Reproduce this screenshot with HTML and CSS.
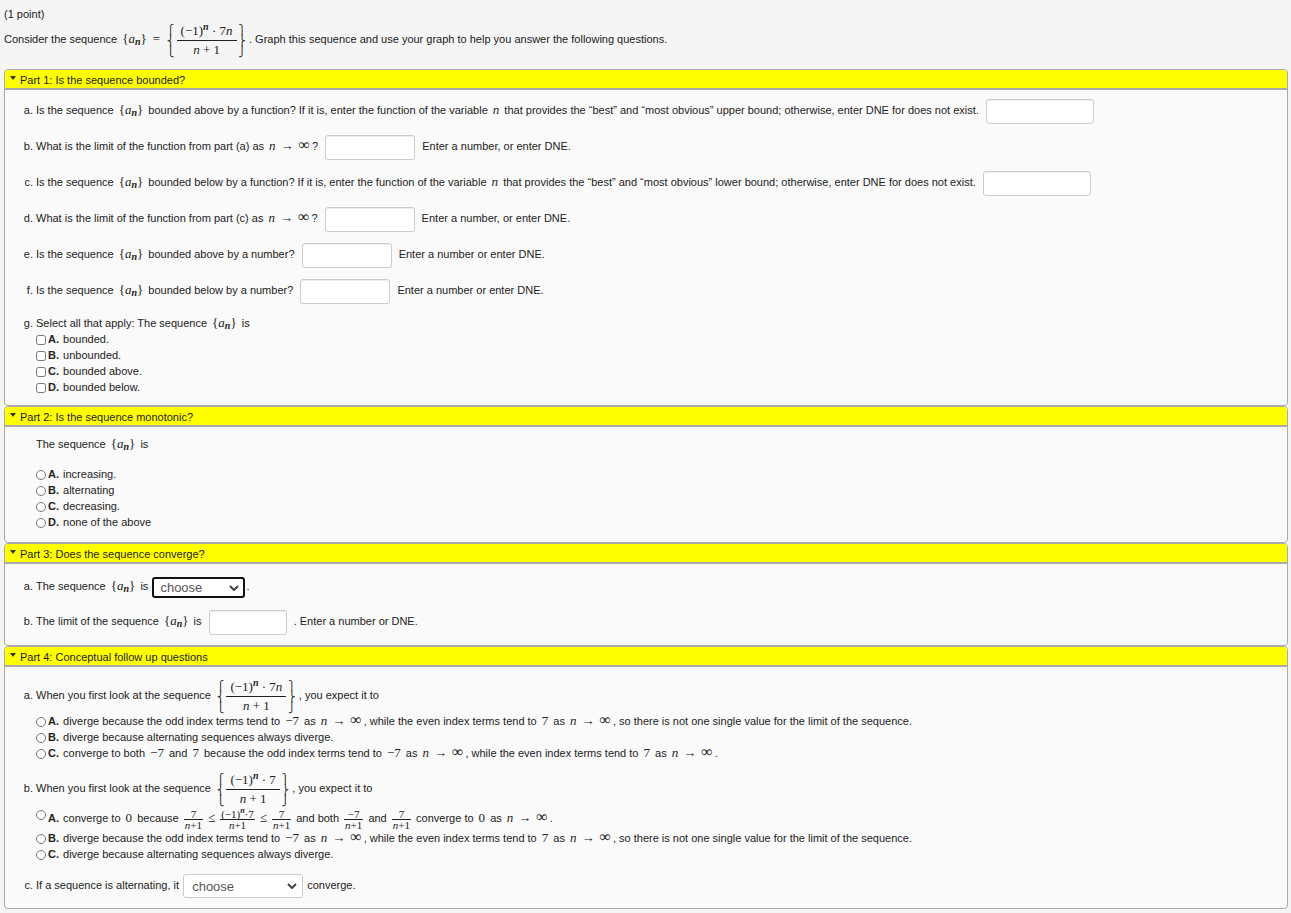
FILE: index.html
```html
<!DOCTYPE html>
<html lang="en">
	<head>
		<meta charset="UTF-8">
		<title>Sequences</title>
		<link rel="stylesheet" href="styles.css">
	</head>
	<body>
		<div class="problem">
			<p class="points">(1 point)</p>
			<p class="intro">Consider the sequence <span class="math">{<i>a<sub>n</sub></i>}<span class="rel">=</span><span class="brace"><span>⎧</span><span>⎨</span><span>⎩</span></span><span class="frac"><span class="num">(−1)<sup>n</sup> · 7<i>n</i></span><span class="den"><i>n</i> + 1</span></span><span class="brace"><span>⎫</span><span>⎬</span><span>⎭</span></span></span>. Graph this sequence and use your graph to help you answer the following questions.</p>

			<!-- Part 1 -->
			<details class="part" open>
				<summary>Part 1: Is the sequence bounded?</summary>
				<div class="inner">
					<ol class="questions">
						<li><label for="p1a">Is the sequence <span class="math">{<i>a<sub>n</sub></i>}</span> bounded above by a function? If it is, enter the function of the variable <i class="math">n</i> that provides the “best” and “most obvious” upper bound; otherwise, enter DNE for does not exist.</label> <input type="text" id="p1a" class="wide"></li>
						<li><label for="p1b">What is the limit of the function from part (a) as <span class="math"><i>n</i><span class="rel">→</span><span class="inf">∞</span></span>?</label> <input type="text" id="p1b"> Enter a number, or enter DNE.</li>
						<li><label for="p1c">Is the sequence <span class="math">{<i>a<sub>n</sub></i>}</span> bounded below by a function? If it is, enter the function of the variable <i class="math">n</i> that provides the “best” and “most obvious” lower bound; otherwise, enter DNE for does not exist.</label> <input type="text" id="p1c" class="wide"></li>
						<li><label for="p1d">What is the limit of the function from part (c) as <span class="math"><i>n</i><span class="rel">→</span><span class="inf">∞</span></span>?</label> <input type="text" id="p1d"> Enter a number, or enter DNE.</li>
						<li><label for="p1e">Is the sequence <span class="math">{<i>a<sub>n</sub></i>}</span> bounded above by a number?</label> <input type="text" id="p1e"> Enter a number or enter DNE.</li>
						<li><label for="p1f">Is the sequence <span class="math">{<i>a<sub>n</sub></i>}</span> bounded below by a number?</label> <input type="text" id="p1f"> Enter a number or enter DNE.</li>
						<li>Select all that apply: The sequence <span class="math">{<i>a<sub>n</sub></i>}</span> is
							<div class="choices">
								<label><input type="checkbox"><b>A.</b> bounded.</label>
								<label><input type="checkbox"><b>B.</b> unbounded.</label>
								<label><input type="checkbox"><b>C.</b> bounded above.</label>
								<label><input type="checkbox"><b>D.</b> bounded below.</label>
							</div>
						</li>
					</ol>
				</div>
			</details>

			<!-- Part 2 -->
			<details class="part" open>
				<summary>Part 2: Is the sequence monotonic?</summary>
				<div class="inner single">
					<p>The sequence <span class="math">{<i>a<sub>n</sub></i>}</span> is</p>
					<div class="choices">
						<label><input type="radio" name="p2"><b>A.</b> increasing.</label>
						<label><input type="radio" name="p2"><b>B.</b> alternating</label>
						<label><input type="radio" name="p2"><b>C.</b> decreasing.</label>
						<label><input type="radio" name="p2"><b>D.</b> none of the above</label>
					</div>
				</div>
			</details>

			<!-- Part 3 -->
			<details class="part" open>
				<summary>Part 3: Does the sequence converge?</summary>
				<div class="inner loose">
					<ol class="questions">
						<li><label for="p3a">The sequence <span class="math">{<i>a<sub>n</sub></i>}</span> is</label> <span class="select active"><select id="p3a"><option>choose</option><option>converges</option><option>diverges</option></select><svg viewBox="0 0 10 6"><path d="M1 1l4 4 4-4"/></svg></span>.</li>
						<li><label for="p3b">The limit of the sequence <span class="math">{<i>a<sub>n</sub></i>}</span> is</label> <input type="text" id="p3b" class="narrow"> . Enter a number or DNE.</li>
					</ol>
				</div>
			</details>

			<!-- Part 4 -->
			<details class="part" open>
				<summary>Part 4: Conceptual follow up questions</summary>
				<div class="inner loose">
					<ol class="questions">
						<li>When you first look at the sequence <span class="math"><span class="brace"><span>⎧</span><span>⎨</span><span>⎩</span></span><span class="frac"><span class="num">(−1)<sup>n</sup> · 7<i>n</i></span><span class="den"><i>n</i> + 1</span></span><span class="brace"><span>⎫</span><span>⎬</span><span>⎭</span></span></span>, you expect it to
							<div class="choices">
								<label><input type="radio" name="p4a"><b>A.</b> diverge because the odd index terms tend to <span class="math">−7</span> as <span class="math"><i>n</i><span class="rel">→</span><span class="inf">∞</span></span>, while the even index terms tend to <span class="math">7</span> as <span class="math"><i>n</i><span class="rel">→</span><span class="inf">∞</span></span>, so there is not one single value for the limit of the sequence.</label>
								<label><input type="radio" name="p4a"><b>B.</b> diverge because alternating sequences always diverge.</label>
								<label><input type="radio" name="p4a"><b>C.</b> converge to both <span class="math">−7</span> and <span class="math">7</span> because the odd index terms tend to <span class="math">−7</span> as <span class="math"><i>n</i><span class="rel">→</span><span class="inf">∞</span></span>, while the even index terms tend to <span class="math">7</span> as <span class="math"><i>n</i><span class="rel">→</span><span class="inf">∞</span></span>.</label>
							</div>
						</li>
						<li>When you first look at the sequence <span class="math"><span class="brace"><span>⎧</span><span>⎨</span><span>⎩</span></span><span class="frac"><span class="num">(−1)<sup>n</sup> · 7</span><span class="den"><i>n</i> + 1</span></span><span class="brace"><span>⎫</span><span>⎬</span><span>⎭</span></span></span>, you expect it to
							<div class="choices">
								<label class="tall"><input type="radio" name="p4b"><b>A.</b> converge to <span class="math">0</span> because <span class="math"><span class="frac small"><span class="num">7</span><span class="den"><i>n</i>+1</span></span><span class="rel">≤</span><span class="frac small"><span class="num">(−1)<sup>n</sup>·7</span><span class="den"><i>n</i>+1</span></span><span class="rel">≤</span><span class="frac small"><span class="num">7</span><span class="den"><i>n</i>+1</span></span></span> and both <span class="math"><span class="frac small"><span class="num">−7</span><span class="den"><i>n</i>+1</span></span></span> and <span class="math"><span class="frac small"><span class="num">7</span><span class="den"><i>n</i>+1</span></span></span> converge to <span class="math">0</span> as <span class="math"><i>n</i><span class="rel">→</span><span class="inf">∞</span></span>.</label>
								<label><input type="radio" name="p4b"><b>B.</b> diverge because the odd index terms tend to <span class="math">−7</span> as <span class="math"><i>n</i><span class="rel">→</span><span class="inf">∞</span></span>, while the even index terms tend to <span class="math">7</span> as <span class="math"><i>n</i><span class="rel">→</span><span class="inf">∞</span></span>, so there is not one single value for the limit of the sequence.</label>
								<label><input type="radio" name="p4b"><b>C.</b> diverge because alternating sequences always diverge.</label>
							</div>
						</li>
						<li><label for="p4c">If a sequence is alternating, it</label> <span class="select"><select id="p4c"><option>choose</option><option>must</option><option>may or may not</option><option>cannot</option></select><svg viewBox="0 0 10 6"><path d="M1 1l4 4 4-4"/></svg></span> converge.</li>
					</ol>
				</div>
			</details>
		</div>
	</body>
</html>
```
FILE: styles.css
```css
*{
	box-sizing: border-box;
}
body{
	margin: 0;
	background: #f5f5f5;
	color: #222;
	font: 11px/16px "Liberation Sans", Arial, sans-serif;
}
p{
	margin: 0;
}
.problem{
	padding: 6px 3px 3px 4px;
}
.intro{
	margin: 2px 0 12px;
}

/* parts */
.part{
	border: 1px solid #aaa;
	border-radius: 4px;
	background: #fafafa;
	overflow: hidden;
}
.part summary{
	display: flex;
	align-items: center;
	height: 20px;
	padding: 2px 5px 0;
	border-bottom: 2px solid #aaa;
	background: #ff0;
	cursor: pointer;
}
.part summary::before{
	content: "";
	margin: 0 4px 4px 0;
	border: 3px solid transparent;
	border-top: 4px solid #333;
	border-bottom: 0;
}
.inner{
	padding: 9px 18px 10px 31px;
}
.inner.loose{
	padding: 13px 18px 10px 31px;
}
.inner.single{
	padding-bottom: 12px;
}
.single p{
	margin-bottom: 14px;
}

/* questions */
.questions{
	margin: 0;
	padding: 0;
	list-style: lower-alpha;
}
.questions > li{
	margin-bottom: 11px;
}
.loose .questions > li{
	margin-bottom: 12px;
}
.questions > li:last-child,
.loose .questions > li:last-child{
	margin-bottom: 0;
}
input[type=text]{
	width: 90px;
	height: 25px;
	margin: 0 4px;
	border: 1px solid #ccc;
	border-radius: 3px;
	background: #fff;
	box-shadow: inset 0 1px 1px rgba(0,0,0,.075);
	vertical-align: middle;
}
input.wide{
	width: 108px;
}
input.narrow{
	width: 78px;
}

/* select with its own arrow */
.select{
	display: inline-grid;
	grid-template-columns: 1fr 16px;
	align-items: center;
	width: 120px;
	margin: 0 1px;
	vertical-align: middle;
}
.select select{
	grid-area: 1 / 1 / 2 / 3;
	height: 24px;
	padding: 0 8px;
	appearance: none;
	border: 1px solid #ccc;
	border-radius: 3px;
	background: #fff;
	color: #555;
	font: 13px "Liberation Sans", Arial, sans-serif;
}
.select svg{
	grid-area: 1 / 2;
	width: 10px;
	height: 6px;
	fill: none;
	stroke: #444;
	stroke-width: 2;
	pointer-events: none;
}
.select.active{
	width: 93px;
}
.select.active select{
	height: 21px;
	padding: 0 6px;
	border: 2px solid #111;
}

/* choices */
.choices label{
	display: block;
}
.choices input{
	width: 10px;
	height: 10px;
	margin: 0 2px 0 0;
	vertical-align: -2px;
}
.choices b{
	margin-right: 1px;
}
.choices .tall{
	padding-top: 3px;
}
.choices .tall input{
	vertical-align: 2px;
}

/* formulas */
.math{
	margin: 0 2px;
	font-family: "Liberation Serif", "Times New Roman", serif;
	font-size: 13px;
	line-height: 12px;
	white-space: nowrap;
}
.math sub,
.math sup{
	font-size: 10px;
	font-style: italic;
	font-weight: bold;
	line-height: 0;
}
.math sub{
	vertical-align: -2px;
}
.rel{
	margin: 0 5px;
}
.inf{
	font-size: 16px;
}
.frac{
	display: inline-flex;
	flex-direction: column;
	margin: 0 1px;
	text-align: center;
	vertical-align: middle;
}
.num{
	padding: 0 4px 3px;
	border-bottom: 1px solid #222;
}
.den{
	padding-top: 3px;
}
/* tall braces are stacked from the three bracket pieces */
.brace{
	display: inline-flex;
	flex-direction: column;
	margin: 0 1px;
	font-family: "DejaVu Sans", sans-serif;
	font-size: 10px;
	line-height: 11px;
	vertical-align: middle;
}
.intro .rel{
	margin: 0 6px;
}
.frac.small{
	margin: 0;
	font-size: 11px;
	line-height: 10px;
}
.small .num,
.small .den{
	padding: 0 1px;
}
.small sup{
	font-size: 8px;
}
```
